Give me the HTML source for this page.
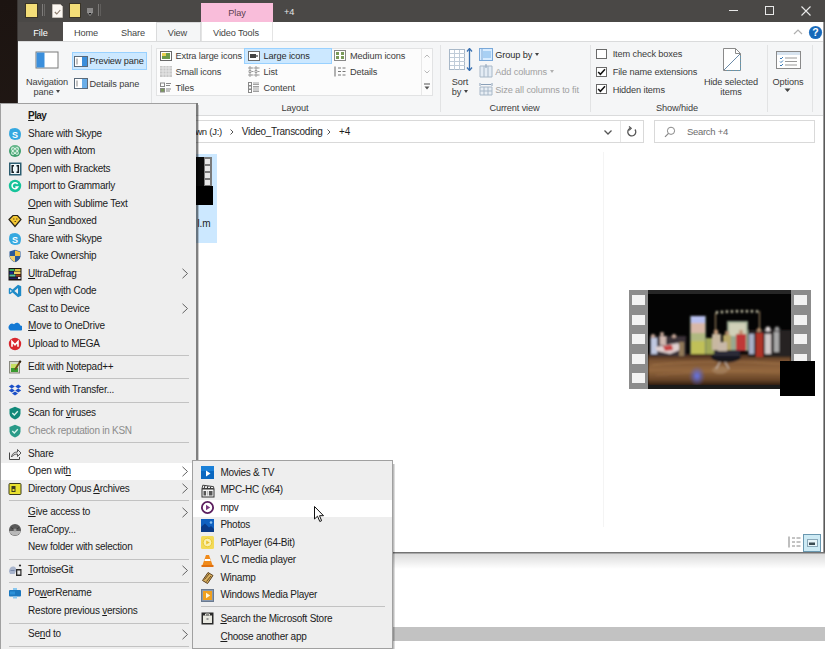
<!DOCTYPE html><html><head><meta charset="utf-8"><style>html,body{margin:0;padding:0;}body{width:825px;height:649px;overflow:hidden;position:relative;background:#fff;font-family:"Liberation Sans",sans-serif;}u{text-decoration:underline;text-underline-offset:1px;}</style></head><body>
<div style="position:absolute;left:0px;top:0px;width:18px;height:649px;background:linear-gradient(180deg,#1c1411 0%,#221915 30%,#2c211d 60%,#2a1f1b 80%,#1e1613 100%)"></div>
<div style="position:absolute;left:17px;top:0px;width:1px;height:110px;background:#3a3634"></div>
<div style="position:absolute;left:18px;top:0px;width:807px;height:22px;background:#4a4846"></div>
<div style="position:absolute;left:26px;top:4px;width:11px;height:13px;background:#f4de78;box-shadow:0 0 0 1px #3a3426"></div>
<div style="position:absolute;left:42px;top:4px;width:1px;height:12px;background:#7e7c7a"></div>
<div style="position:absolute;left:44px;top:4px;width:1px;height:12px;background:#6a6866"></div>
<svg style="position:absolute;left:52px;top:4px" width="11" height="14" viewBox="0 0 11 14"><path d="M0.5 0.5h8l2 2v11h-10z" fill="#fbf7f2" stroke="#d8d0c8" stroke-width="0.6"/><path d="M2.8 8l2 2 3.5-4" stroke="#8a7a6a" stroke-width="1.1" fill="none"/></svg>
<div style="position:absolute;left:70px;top:4px;width:10px;height:13px;background:#f4de78;box-shadow:0 0 0 1px #3a3426"></div>
<svg style="position:absolute;left:86px;top:8px" width="8" height="8" viewBox="0 0 8 8"><path d="M1 1h6M1 3h6" stroke="#d8d8d8" stroke-width="0.9"/><path d="M1.5 4.5h5l-2.5 3z" fill="#1a1a1a" stroke="#d8d8d8" stroke-width="0.6"/></svg>
<div style="position:absolute;left:98px;top:4px;width:1px;height:12px;background:#7a7876"></div>
<div style="position:absolute;left:100px;top:4px;width:1px;height:12px;background:#605e5c"></div>
<div style="position:absolute;left:201px;top:2.5px;width:72px;height:19.5px;background:#f9bdda"></div>
<div style="position:absolute;left:137px;width:200px;top:5.5px;height:14px;line-height:14px;font-size:9.2px;letter-spacing:-0.12px;color:#5b3f50;font-weight:normal;text-align:center;white-space:nowrap;">Play</div>
<div style="position:absolute;left:284px;top:5.0px;height:14px;line-height:14px;font-size:9.2px;letter-spacing:-0.12px;color:#e6e6e6;font-weight:normal;white-space:nowrap;">+4</div>
<div style="position:absolute;left:729px;top:10px;width:9px;height:1px;background:#e8e8e8"></div>
<div style="position:absolute;left:765px;top:6px;width:8px;height:8px;border:1px solid #e8e8e8;box-sizing:border-box;width:9px;height:9px"></div>
<svg style="position:absolute;left:801px;top:6px" width="10" height="10" viewBox="0 0 10 10"><path d="M0.5 0.5l9 9M9.5 0.5l-9 9" stroke="#eaeaea" stroke-width="1.1"/></svg>
<div style="position:absolute;left:18px;top:22px;width:805px;height:19px;background:#ffffff"></div>
<div style="position:absolute;left:18px;top:22px;width:45px;height:19px;background:#4f4c4a"></div>
<div style="position:absolute;left:-59.5px;width:200px;top:25.799999999999997px;height:14px;line-height:14px;font-size:9.2px;letter-spacing:-0.12px;color:#ffffff;font-weight:normal;text-align:center;white-space:nowrap;">File</div>
<div style="position:absolute;left:-14px;width:200px;top:25.799999999999997px;height:14px;line-height:14px;font-size:9.2px;letter-spacing:-0.12px;color:#444444;font-weight:normal;text-align:center;white-space:nowrap;">Home</div>
<div style="position:absolute;left:33px;width:200px;top:25.799999999999997px;height:14px;line-height:14px;font-size:9.2px;letter-spacing:-0.12px;color:#444444;font-weight:normal;text-align:center;white-space:nowrap;">Share</div>
<div style="position:absolute;left:156px;top:22px;width:45px;height:20px;background:#f5f6f7;border:1px solid #dadbdc;border-bottom:none;box-sizing:border-box"></div>
<div style="position:absolute;left:77.5px;width:200px;top:25.799999999999997px;height:14px;line-height:14px;font-size:9.2px;letter-spacing:-0.12px;color:#444444;font-weight:normal;text-align:center;white-space:nowrap;">View</div>
<div style="position:absolute;left:201px;top:22px;width:72px;height:19px;background:#ffffff;border-left:1px solid #e4e4e4;border-right:1px solid #e4e4e4;box-sizing:border-box"></div>
<div style="position:absolute;left:136px;width:200px;top:26.0px;height:14px;line-height:14px;font-size:9.2px;letter-spacing:-0.12px;color:#444444;font-weight:normal;text-align:center;white-space:nowrap;">Video Tools</div>
<svg style="position:absolute;left:793px;top:28px" width="10" height="7" viewBox="0 0 10 7"><path d="M1 6l4-4 4 4" stroke="#b0b0b0" stroke-width="1.2" fill="none"/></svg>
<svg style="position:absolute;left:808px;top:25px" width="15" height="15" viewBox="0 0 15 15"><circle cx="7.5" cy="7.5" r="6.6" fill="#1f6fc0"/><circle cx="7.5" cy="7.5" r="5.5" fill="#1668b8"/><text x="7.5" y="11.3" font-family="Liberation Sans" font-weight="bold" font-size="10.5" fill="#fff" text-anchor="middle">?</text></svg>
<div style="position:absolute;left:18px;top:41px;width:805px;height:75px;background:#f5f6f7;border-top:1px solid #dadbdc;border-bottom:1px solid #dadbdc;box-sizing:border-box"></div>
<svg style="position:absolute;left:35px;top:51px" width="24" height="18" viewBox="0 0 24 18"><rect x="1" y="1" width="22" height="16" fill="#fff" stroke="#7a7a7a"/><rect x="1.5" y="1.5" width="8" height="15" fill="#3b8fdc"/></svg>
<div style="position:absolute;left:-53px;width:200px;top:74.6px;height:14px;line-height:14px;font-size:9.2px;letter-spacing:-0.12px;color:#3b3b3b;font-weight:normal;text-align:center;white-space:nowrap;">Navigation</div>
<div style="position:absolute;left:-53px;width:200px;top:85.0px;height:14px;line-height:14px;font-size:9.2px;letter-spacing:-0.12px;color:#3b3b3b;font-weight:normal;text-align:center;white-space:nowrap;">pane<span style='display:inline-block;width:0;height:0;border-left:2.5px solid transparent;border-right:2.5px solid transparent;border-top:3px solid #444;vertical-align:middle;margin-left:3px;position:relative;top:-1px'></span></div>
<div style="position:absolute;left:72px;top:51.5px;width:75px;height:18px;background:#cce8ff;border:1px solid #99d1ff;box-sizing:border-box"></div>
<svg style="position:absolute;left:74px;top:55.5px" width="14" height="11" viewBox="0 0 14 11"><rect x="0.5" y="0.5" width="13" height="10" fill="#fff" stroke="#5a6a7a"/><rect x="8" y="1" width="5" height="9" fill="#3b8fdc"/><rect x="2.5" y="2.5" width="1" height="6" fill="#888"/></svg>
<div style="position:absolute;left:89.5px;top:53.8px;height:14px;line-height:14px;font-size:9.2px;letter-spacing:-0.12px;color:#2a2a2a;font-weight:normal;white-space:nowrap;">Preview pane</div>
<svg style="position:absolute;left:74px;top:78px" width="14" height="11" viewBox="0 0 14 11"><rect x="0.5" y="0.5" width="13" height="10" fill="#fff" stroke="#5a6a7a"/><rect x="8" y="1" width="5" height="9" fill="#6aaee8"/><rect x="2.5" y="2.5" width="1" height="6" fill="#888"/></svg>
<div style="position:absolute;left:89.5px;top:77.0px;height:14px;line-height:14px;font-size:9.2px;letter-spacing:-0.12px;color:#3b3b3b;font-weight:normal;white-space:nowrap;">Details pane</div>
<div style="position:absolute;left:151px;top:45px;width:1px;height:67px;background:#e2e3e4"></div>
<div style="position:absolute;left:156px;top:48px;width:277px;height:48px;border:1px solid #e2e3e4;box-sizing:border-box;background:#fcfcfc"></div>
<div style="position:absolute;left:244px;top:48px;width:88px;height:16px;background:#cce8ff;border:1px solid #99d1ff;box-sizing:border-box"></div>
<svg style="position:absolute;left:160px;top:51px" width="12" height="10" viewBox="0 0 12 10"><rect x="0.5" y="0.5" width="11" height="9" fill="#fff" stroke="#6a6a6a"/><rect x="2" y="2" width="8" height="6" fill="#6a9a4a"/><rect x="2" y="2" width="4" height="3" fill="#e8d050"/></svg>
<div style="position:absolute;left:175.5px;top:49.0px;height:14px;line-height:14px;font-size:9.2px;letter-spacing:-0.12px;color:#3b3b3b;font-weight:normal;white-space:nowrap;">Extra large icons</div>
<svg style="position:absolute;left:248px;top:51px" width="12" height="10" viewBox="0 0 12 10"><rect x="0.5" y="0.5" width="11" height="9" fill="#fff" stroke="#6a6a6a"/><rect x="2" y="3" width="6" height="4" fill="#444"/><rect x="8" y="4" width="2" height="2" fill="#888"/></svg>
<div style="position:absolute;left:263.6px;top:49.0px;height:14px;line-height:14px;font-size:9.2px;letter-spacing:-0.12px;color:#2a2a2a;font-weight:normal;white-space:nowrap;">Large icons</div>
<svg style="position:absolute;left:334px;top:50px" width="12" height="11" viewBox="0 0 12 11"><rect x="0.5" y="0.5" width="11" height="10" fill="#fff" stroke="#888"/><rect x="2" y="2" width="3" height="3" fill="#7a9a5a"/><rect x="7" y="2" width="3" height="3" fill="#7a9a5a"/><rect x="2" y="6" width="3" height="3" fill="#7a9a5a"/><rect x="7" y="6" width="3" height="3" fill="#7a9a5a"/></svg>
<div style="position:absolute;left:350px;top:49.0px;height:14px;line-height:14px;font-size:9.2px;letter-spacing:-0.12px;color:#3b3b3b;font-weight:normal;white-space:nowrap;">Medium icons</div>
<svg style="position:absolute;left:160px;top:66px" width="12" height="11" viewBox="0 0 12 11"><rect x="0" y="0" width="12" height="11" fill="#c8c8c8"/><path d="M0 2h12M0 5h12M0 8h12M3 0v11M6 0v11M9 0v11" stroke="#e6e6e6" stroke-width="1"/></svg>
<div style="position:absolute;left:175.5px;top:64.8px;height:14px;line-height:14px;font-size:9.2px;letter-spacing:-0.12px;color:#3b3b3b;font-weight:normal;white-space:nowrap;">Small icons</div>
<svg style="position:absolute;left:248px;top:66px" width="12" height="11" viewBox="0 0 12 11"><path d="M1 1h2v2H1zM1 4.5h2v2H1zM1 8h2v2H1zM7 1h2v2H7zM7 4.5h2v2H7zM7 8h2v2H7z" fill="none" stroke="#888" stroke-width="0.8"/><path d="M3.5 2h2M3.5 5.5h2M3.5 9h2M9.5 2h2M9.5 5.5h2M9.5 9h2" stroke="#999"/></svg>
<div style="position:absolute;left:263.6px;top:64.8px;height:14px;line-height:14px;font-size:9.2px;letter-spacing:-0.12px;color:#3b3b3b;font-weight:normal;white-space:nowrap;">List</div>
<svg style="position:absolute;left:334px;top:66px" width="12" height="11" viewBox="0 0 12 11"><path d="M1 0.5v10" stroke="#999" stroke-width="1.5"/><path d="M4 2h3M4 5.5h3M4 9h3M8.5 2h3M8.5 5.5h3M8.5 9h3" stroke="#777"/></svg>
<div style="position:absolute;left:350px;top:64.8px;height:14px;line-height:14px;font-size:9.2px;letter-spacing:-0.12px;color:#3b3b3b;font-weight:normal;white-space:nowrap;">Details</div>
<svg style="position:absolute;left:160px;top:82px" width="12" height="11" viewBox="0 0 12 11"><rect x="0.5" y="1" width="4" height="3.5" fill="none" stroke="#888"/><rect x="0.5" y="6.5" width="4" height="3.5" fill="#7a9a5a" stroke="#888"/><path d="M6 1.5h5M6 3.5h4M6 7h5M6 9h4" stroke="#888"/></svg>
<div style="position:absolute;left:175.5px;top:80.6px;height:14px;line-height:14px;font-size:9.2px;letter-spacing:-0.12px;color:#3b3b3b;font-weight:normal;white-space:nowrap;">Tiles</div>
<svg style="position:absolute;left:248px;top:82px" width="12" height="11" viewBox="0 0 12 11"><rect x="0.5" y="0.5" width="3" height="3" fill="none" stroke="#888"/><rect x="0.5" y="4" width="3" height="3" fill="none" stroke="#888"/><rect x="0.5" y="7.5" width="3" height="3" fill="none" stroke="#888"/><path d="M5 1h6M5 2.5h6M5 4.5h6M5 6h6M5 8h6M5 9.5h6" stroke="#888" stroke-width="0.8"/></svg>
<div style="position:absolute;left:263.6px;top:80.6px;height:14px;line-height:14px;font-size:9.2px;letter-spacing:-0.12px;color:#3b3b3b;font-weight:normal;white-space:nowrap;">Content</div>
<div style="position:absolute;left:421px;top:49px;width:11px;height:46px;border-left:1px solid #e8e8e8;box-sizing:border-box"></div>
<svg style="position:absolute;left:423px;top:53px" width="8" height="6" viewBox="0 0 8 6"><path d="M1.5 4.5l2.5-2.5 2.5 2.5" stroke="#b8b8b8" fill="none"/></svg>
<svg style="position:absolute;left:423px;top:69px" width="8" height="6" viewBox="0 0 8 6"><path d="M1.5 1.5l2.5 2.5 2.5-2.5" stroke="#b8b8b8" fill="none"/></svg>
<svg style="position:absolute;left:423px;top:83px" width="8" height="8" viewBox="0 0 8 8"><path d="M1 1h6" stroke="#555"/><path d="M1.5 3.5h5l-2.5 3z" fill="#555"/></svg>
<div style="position:absolute;left:195px;width:200px;top:100.7px;height:14px;line-height:14px;font-size:9.2px;letter-spacing:-0.12px;color:#3b3b3b;font-weight:normal;text-align:center;white-space:nowrap;">Layout</div>
<div style="position:absolute;left:440px;top:45px;width:1px;height:67px;background:#e2e3e4"></div>
<svg style="position:absolute;left:449px;top:48px" width="24" height="23" viewBox="0 0 24 23"><rect x="0.5" y="1.5" width="15" height="20" fill="#fff" stroke="#a8b8c8"/><path d="M1 5.5h15M1 9.5h15M1 13.5h15M1 17.5h15M5.5 2v20M10.5 2v20" stroke="#c0ccd8"/><path d="M20.5 1v21" stroke="#3a70b0" stroke-width="1.3"/><path d="M18 3.5l2.5-3 2.5 3M18 19.5l2.5 3 2.5-3" stroke="#3a70b0" stroke-width="1.3" fill="none"/></svg>
<div style="position:absolute;left:360px;width:200px;top:74.5px;height:14px;line-height:14px;font-size:9.2px;letter-spacing:-0.12px;color:#3b3b3b;font-weight:normal;text-align:center;white-space:nowrap;">Sort</div>
<div style="position:absolute;left:360px;width:200px;top:85.0px;height:14px;line-height:14px;font-size:9.2px;letter-spacing:-0.12px;color:#3b3b3b;font-weight:normal;text-align:center;white-space:nowrap;">by<span style='display:inline-block;width:0;height:0;border-left:2.5px solid transparent;border-right:2.5px solid transparent;border-top:3px solid #444;vertical-align:middle;margin-left:3px;position:relative;top:-1px'></span></div>
<svg style="position:absolute;left:479px;top:48px" width="14" height="13" viewBox="0 0 14 13"><rect x="0.5" y="0.5" width="13" height="12" fill="#d8ecff" stroke="#7aa8d8"/><path d="M3 1v11" stroke="#7aa8d8"/><rect x="4" y="3" width="8" height="7" fill="#a8d0f4"/></svg>
<div style="position:absolute;left:495.3px;top:47.8px;height:14px;line-height:14px;font-size:9.2px;letter-spacing:-0.12px;color:#2a2a2a;font-weight:normal;white-space:nowrap;">Group by<span style='display:inline-block;width:0;height:0;border-left:2.5px solid transparent;border-right:2.5px solid transparent;border-top:3px solid #444;vertical-align:middle;margin-left:3px;position:relative;top:-1px'></span></div>
<svg style="position:absolute;left:479px;top:64px" width="14" height="14" viewBox="0 0 14 14"><path d="M1 2h12v11H1z" fill="#e4ecf4" stroke="#a8b8c8"/><path d="M5 2v11M9 2v11" stroke="#a8b8c8"/><path d="M7 0v4" stroke="#8aa0b8"/></svg>
<div style="position:absolute;left:495.3px;top:65.0px;height:14px;line-height:14px;font-size:9.2px;letter-spacing:-0.12px;color:#a0a0a0;font-weight:normal;white-space:nowrap;">Add columns<span style='display:inline-block;width:0;height:0;border-left:2.5px solid transparent;border-right:2.5px solid transparent;border-top:3px solid #b0b0b0;vertical-align:middle;margin-left:3px;position:relative;top:-1px'></span></div>
<svg style="position:absolute;left:479px;top:82px" width="14" height="14" viewBox="0 0 14 14"><path d="M1 5h12v8H1z" fill="#e8eef4" stroke="#a8b8c8"/><path d="M5 5v8M9 5v8M1 9h12" stroke="#a8b8c8"/><path d="M1 1v3M13 1v3M2 2.5h10" stroke="#8aa0b8"/></svg>
<div style="position:absolute;left:495.3px;top:82.8px;height:14px;line-height:14px;font-size:9.2px;letter-spacing:-0.12px;color:#a0a0a0;font-weight:normal;white-space:nowrap;">Size all columns to fit</div>
<div style="position:absolute;left:414.5px;width:200px;top:101.0px;height:14px;line-height:14px;font-size:9.2px;letter-spacing:-0.12px;color:#3b3b3b;font-weight:normal;text-align:center;white-space:nowrap;">Current view</div>
<div style="position:absolute;left:590px;top:45px;width:1px;height:67px;background:#e2e3e4"></div>
<div style="position:absolute;left:596px;top:49px;width:11px;height:10px;border:1px solid #6a6a6a;background:#fff;box-sizing:border-box"></div>
<div style="position:absolute;left:596px;top:67px;width:11px;height:10px;border:1px solid #6a6a6a;background:#fff;box-sizing:border-box"></div>
<div style="position:absolute;left:596px;top:84px;width:11px;height:10px;border:1px solid #6a6a6a;background:#fff;box-sizing:border-box"></div>
<svg style="position:absolute;left:597px;top:68px" width="9" height="8" viewBox="0 0 9 8"><path d="M1.2 4l2.2 2.3L8 1.3" stroke="#111" stroke-width="1.5" fill="none"/></svg>
<svg style="position:absolute;left:597px;top:85px" width="9" height="8" viewBox="0 0 9 8"><path d="M1.2 4l2.2 2.3L8 1.3" stroke="#111" stroke-width="1.5" fill="none"/></svg>
<div style="position:absolute;left:612.7px;top:47.4px;height:14px;line-height:14px;font-size:9.2px;letter-spacing:-0.12px;color:#3b3b3b;font-weight:normal;white-space:nowrap;">Item check boxes</div>
<div style="position:absolute;left:612.7px;top:64.9px;height:14px;line-height:14px;font-size:9.2px;letter-spacing:-0.12px;color:#3b3b3b;font-weight:normal;white-space:nowrap;">File name extensions</div>
<div style="position:absolute;left:612.7px;top:82.6px;height:14px;line-height:14px;font-size:9.2px;letter-spacing:-0.12px;color:#3b3b3b;font-weight:normal;white-space:nowrap;">Hidden items</div>
<svg style="position:absolute;left:722px;top:48px" width="20" height="24" viewBox="0 0 20 24"><path d="M1.5 0.5h12l5 5v17h-17z" fill="#fff" stroke="#8a8a8a"/><path d="M13.5 0.5v5h5" fill="none" stroke="#8a8a8a"/><path d="M2 22l16-16" stroke="#6a8aa8"/><path d="M18.5 8v14.5H5" stroke="#5a9ab8" stroke-dasharray="1.5 1.5" fill="none"/></svg>
<div style="position:absolute;left:631px;width:200px;top:74.6px;height:14px;line-height:14px;font-size:9.2px;letter-spacing:-0.12px;color:#3b3b3b;font-weight:normal;text-align:center;white-space:nowrap;">Hide selected</div>
<div style="position:absolute;left:631px;width:200px;top:85.3px;height:14px;line-height:14px;font-size:9.2px;letter-spacing:-0.12px;color:#3b3b3b;font-weight:normal;text-align:center;white-space:nowrap;">items</div>
<div style="position:absolute;left:577px;width:200px;top:100.5px;height:14px;line-height:14px;font-size:9.2px;letter-spacing:-0.12px;color:#3b3b3b;font-weight:normal;text-align:center;white-space:nowrap;">Show/hide</div>
<div style="position:absolute;left:767px;top:45px;width:1px;height:67px;background:#e2e3e4"></div>
<svg style="position:absolute;left:776px;top:51px" width="25" height="18" viewBox="0 0 25 18"><rect x="0.5" y="0.5" width="24" height="17" fill="#fff" stroke="#8a8a8a"/><rect x="1" y="1" width="23" height="3" fill="#d8e4f0"/><path d="M4 7l1 1 2-2M4 10.5l1 1 2-2M4 14l1 1 2-2" stroke="#3a7ab8" fill="none"/><path d="M9 7h12M9 10.5h12M9 14h12" stroke="#999"/></svg>
<div style="position:absolute;left:688px;width:200px;top:74.6px;height:14px;line-height:14px;font-size:9.2px;letter-spacing:-0.12px;color:#3b3b3b;font-weight:normal;text-align:center;white-space:nowrap;">Options</div>
<svg style="position:absolute;left:784px;top:88px" width="7" height="5" viewBox="0 0 7 5"><path d="M0.5 0.5h6l-3 3.5z" fill="#444"/></svg>
<div style="position:absolute;left:812px;top:45px;width:1px;height:67px;background:#e2e3e4"></div>
<div style="position:absolute;left:120px;top:120px;width:524px;height:23px;border:1px solid #d9d9d9;box-sizing:border-box;background:#fff"></div>
<div style="position:absolute;left:620px;top:121px;width:1px;height:21px;background:#e6e6e6"></div>
<div style="position:absolute;left:100px;width:122px;text-align:right;top:124.5px;height:14px;line-height:14px;font-size:9.5px;letter-spacing:-0.25px;color:#1e1e1e;white-space:nowrap">Unknown (J:)</div>
<svg style="position:absolute;left:229px;top:128px" width="6" height="8" viewBox="0 0 6 8"><path d="M1.5 1.5l2.5 2.5-2.5 2.5" stroke="#555" fill="none"/></svg>
<div style="position:absolute;left:241.8px;top:124.5px;height:14px;line-height:14px;font-size:10px;letter-spacing:-0.28px;color:#1e1e1e;font-weight:normal;white-space:nowrap;">Video_Transcoding</div>
<svg style="position:absolute;left:326px;top:128px" width="6" height="8" viewBox="0 0 6 8"><path d="M1.5 1.5l2.5 2.5-2.5 2.5" stroke="#555" fill="none"/></svg>
<div style="position:absolute;left:339px;top:124.5px;height:14px;line-height:14px;font-size:10px;letter-spacing:-0.12px;color:#1e1e1e;font-weight:normal;white-space:nowrap;">+4</div>
<svg style="position:absolute;left:603px;top:129px" width="10" height="7" viewBox="0 0 10 7"><path d="M1.5 1.5l3.5 3.5 3.5-3.5" stroke="#555" stroke-width="1.3" fill="none"/></svg>
<svg style="position:absolute;left:626px;top:126px" width="12" height="12" viewBox="0 0 12 12"><path d="M9 3.5A4 4 0 1 1 4 2.3" stroke="#555" stroke-width="1.3" fill="none"/><path d="M3 0.5l2.2 1.8-2 2" stroke="#555" stroke-width="1.2" fill="none"/></svg>
<div style="position:absolute;left:654px;top:120px;width:161px;height:23px;border:1px solid #d9d9d9;box-sizing:border-box;background:#fff"></div>
<svg style="position:absolute;left:664px;top:126px" width="12" height="12" viewBox="0 0 12 12"><circle cx="7" cy="4.8" r="3.6" stroke="#888" stroke-width="1" fill="none"/><path d="M4.5 7.3L1 10.8" stroke="#888" stroke-width="1.2"/></svg>
<div style="position:absolute;left:687px;top:124.5px;height:14px;line-height:14px;font-size:9.5px;letter-spacing:-0.3px;color:#6d6d6d;font-weight:normal;white-space:nowrap;">Search +4</div>
<div style="position:absolute;left:150px;top:154px;width:67px;height:89px;background:#cce8ff"></div>
<div style="position:absolute;left:150px;top:157px;width:61px;height:29px;background:#0a0a0a"></div>
<div style="position:absolute;left:203.5px;top:157px;width:8px;height:29px;background:#7a7a7a"></div>
<div style="position:absolute;left:205px;top:159px;width:5px;height:5px;background:#e8e8e8"></div>
<div style="position:absolute;left:205px;top:166px;width:5px;height:5px;background:#e8e8e8"></div>
<div style="position:absolute;left:205px;top:173px;width:5px;height:5px;background:#e8e8e8"></div>
<div style="position:absolute;left:205px;top:180px;width:5px;height:5px;background:#e8e8e8"></div>
<div style="position:absolute;left:150px;top:186px;width:63px;height:19px;background:#000"></div>
<div style="position:absolute;left:197.5px;top:216.5px;height:14px;line-height:14px;font-size:10px;letter-spacing:-0.1px;color:#1e1e1e;font-weight:normal;white-space:nowrap;">l.m</div>
<div style="position:absolute;left:603px;top:152px;width:1px;height:375px;background:#f4f4f4"></div>
<div style="position:absolute;left:629px;top:290px;width:182px;height:99px;background:#8c8c8c"></div>
<div style="position:absolute;left:632px;top:295.0px;width:13px;height:10px;background:#f2f2f2"></div>
<div style="position:absolute;left:794px;top:295.0px;width:13px;height:10px;background:#f2f2f2"></div>
<div style="position:absolute;left:632px;top:314.6px;width:13px;height:10px;background:#f2f2f2"></div>
<div style="position:absolute;left:794px;top:314.6px;width:13px;height:10px;background:#f2f2f2"></div>
<div style="position:absolute;left:632px;top:334.2px;width:13px;height:10px;background:#f2f2f2"></div>
<div style="position:absolute;left:794px;top:334.2px;width:13px;height:10px;background:#f2f2f2"></div>
<div style="position:absolute;left:632px;top:353.8px;width:13px;height:10px;background:#f2f2f2"></div>
<div style="position:absolute;left:794px;top:353.8px;width:13px;height:10px;background:#f2f2f2"></div>
<div style="position:absolute;left:632px;top:373.4px;width:13px;height:10px;background:#f2f2f2"></div>
<div style="position:absolute;left:794px;top:373.4px;width:13px;height:10px;background:#f2f2f2"></div>
<svg style="position:absolute;left:648px;top:290px" width="143" height="99" viewBox="0 0 143 99">
<defs>
<linearGradient id="flr" x1="0" y1="0" x2="0" y2="1"><stop offset="0" stop-color="#3a2416"/><stop offset="0.2" stop-color="#7a5232"/><stop offset="0.5" stop-color="#94683e"/><stop offset="0.8" stop-color="#6a4628"/><stop offset="1" stop-color="#2a1a10"/></linearGradient>
<radialGradient id="blu" cx="0.5" cy="0.5" r="0.5"><stop offset="0" stop-color="#6a7af0"/><stop offset="1" stop-color="#4a5ad0" stop-opacity="0"/></radialGradient>
<filter id="bl" x="-5%" y="-5%" width="110%" height="110%"><feGaussianBlur stdDeviation="0.9"/></filter>
</defs>
<rect width="143" height="99" fill="#040404"/>
<g filter="url(#bl)">
<rect y="64" width="143" height="32" fill="url(#flr)"/>
<path d="M4 75 Q60 69 138 74" stroke="#b88858" stroke-width="1.2" fill="none" opacity="0.55"/>
<path d="M8 85 Q70 79 132 83" stroke="#a87850" stroke-width="1" fill="none" opacity="0.5"/>
<ellipse cx="49" cy="86" rx="8" ry="10" fill="url(#blu)"/>
<ellipse cx="72" cy="80" rx="8" ry="4" fill="#b09070" opacity="0.5"/>
<!-- banner -->
<rect x="42" y="26" width="16" height="38" fill="#6a7a60"/>
<rect x="43" y="26" width="14" height="7" fill="#b8c0f0"/>
<rect x="43" y="33" width="14" height="10" fill="#d8b8a8"/>
<rect x="43" y="43" width="14" height="8" fill="#b0b880"/>
<rect x="43" y="51" width="14" height="13" fill="#c0c058"/>
<!-- light string -->
<path d="M67.5 42 V23 M111.5 42 V21" stroke="#c8a878" stroke-width="0.9"/>
<path d="M68 22.5 Q89 20.5 111 21.5" stroke="#fffad8" stroke-width="2.5" stroke-dasharray="2 3" fill="none"/>
<!-- board -->
<rect x="79" y="31" width="21" height="30" fill="#98a890"/>
<rect x="81" y="33" width="17" height="13" fill="#d0d0b8"/>
<!-- left group -->
<rect x="2" y="46" width="36" height="20" fill="#3a3038"/>
<circle cx="5" cy="46" r="2" fill="#d0b0a0"/><circle cx="14" cy="44" r="2" fill="#d0b0a0"/><circle cx="26" cy="46" r="2" fill="#d0b0a0"/>
<rect x="3" y="48" width="6" height="16" fill="#c0c8e0"/>
<rect x="12" y="46" width="6" height="9" fill="#d0b8b0"/>
<path d="M7 57 L30 53 L34 59 L22 64 L9 61z" fill="#e0d0d0"/>
<path d="M15 56 L24 55 L25 60 L17 61z" fill="#c84040"/>
<rect x="31" y="52" width="5" height="14" fill="#907858"/>
<!-- center people -->
<rect x="58" y="48" width="9" height="16" fill="#a0a858"/>
<rect x="64" y="44" width="9" height="16" fill="#c8b8a0"/>
<circle cx="68" cy="42" r="2.4" fill="#c09878"/>
<rect x="75" y="45" width="8" height="16" fill="#b8a868"/>
<circle cx="79" cy="43" r="2.2" fill="#b08868"/>
<rect x="88" y="44" width="10" height="17" fill="#c03838"/>
<circle cx="93" cy="42" r="2.2" fill="#c09070"/>
<!-- right group -->
<rect x="100" y="40" width="43" height="27" fill="#262024"/>
<rect x="101" y="44" width="5" height="20" fill="#a8b0c8"/>
<rect x="108" y="43" width="7" height="24" fill="#b03028"/>
<rect x="117" y="44" width="6" height="20" fill="#d0c8c8"/>
<rect x="126" y="42" width="5" height="20" fill="#a8a8a8"/>
<circle cx="111" cy="40" r="2.2" fill="#b08868"/><circle cx="120" cy="39" r="2.6" fill="#e0d8d8"/><circle cx="129" cy="39" r="2.5" fill="#999"/>
<!-- kid on tire -->
<ellipse cx="78" cy="67" rx="15" ry="5.5" fill="#18181e"/>
<rect x="66" y="60" width="26" height="6" fill="#2a2a38"/>
<rect x="70" y="52" width="9" height="9" fill="#c8b8a8"/>
<path d="M72 72 L68 79 M77 72 L81 79" stroke="#d8d0c8" stroke-width="1"/>
</g>
<rect y="0" width="143" height="4" fill="#262626"/>
<rect y="95" width="143" height="4" fill="#1a1a1a"/>
</svg>
<div style="position:absolute;left:780px;top:361px;width:35px;height:35px;background:#000"></div>
<div style="position:absolute;left:823px;top:22px;width:1px;height:531px;background:#9a9a9a"></div>
<div style="position:absolute;left:824px;top:22px;width:1px;height:531px;background:#5a5a5a"></div>
<svg style="position:absolute;left:788px;top:536px" width="14" height="12" viewBox="0 0 14 12"><path d="M1 0.5v11" stroke="#aaa" stroke-width="1.5"/><path d="M4 2h3M4 6h3M4 10h3M8.5 2h4M8.5 6h4M8.5 10h4" stroke="#888"/></svg>
<div style="position:absolute;left:803px;top:534px;width:18px;height:18px;background:#cdeaf4;border:1px solid #6a98b0;box-sizing:border-box"></div>
<svg style="position:absolute;left:807px;top:539px" width="11" height="8" viewBox="0 0 11 8"><rect x="0.5" y="0.5" width="10" height="7" fill="#e8f4f8" stroke="#8aa8b8"/><path d="M2 3.5h6v2.5H2z" fill="#3a4a50"/></svg>
<div style="position:absolute;left:18px;top:552px;width:807px;height:1px;background:#737373"></div>
<div style="position:absolute;left:18px;top:553px;width:807px;height:1px;background:#a8a8a8"></div>
<div style="position:absolute;left:18px;top:554px;width:807px;height:15px;background:linear-gradient(180deg,rgba(0,0,0,0.14),rgba(0,0,0,0))"></div>
<div style="position:absolute;left:18px;top:627px;width:807px;height:14px;background:#c2c2c2"></div>
<div style="position:absolute;left:0px;top:103px;width:196px;height:560px;background:#eeeeee;border:1px solid #a0a0a0;border-right:none;box-sizing:border-box"></div>
<div style="position:absolute;left:196px;top:103px;width:2px;height:546px;background:rgba(0,0,0,0.5)"></div>
<div style="position:absolute;left:198px;top:105px;width:1px;height:544px;background:rgba(0,0,0,0.2)"></div>
<div style="position:absolute;left:28.1px;top:109.0px;height:14px;line-height:14px;font-size:10px;letter-spacing:-0.25px;color:#1b1b1b;font-weight:normal;white-space:nowrap;"><b style='letter-spacing:-0.6px'><u>P</u>lay</b></div>
<svg style="position:absolute;left:8px;top:126.5px" width="14" height="14" viewBox="0 0 14 14"><circle cx="7" cy="7" r="6" fill="#35a8e0"/><circle cx="4.5" cy="4.5" r="3" fill="#35a8e0"/><circle cx="9.5" cy="9.5" r="3" fill="#35a8e0"/><text x="7" y="10.5" font-family="Liberation Sans" font-weight="bold" font-size="9" fill="#fff" text-anchor="middle">S</text></svg>
<div style="position:absolute;left:28.1px;top:126.5px;height:14px;line-height:14px;font-size:10px;letter-spacing:-0.25px;color:#1b1b1b;font-weight:normal;white-space:nowrap;">Share with Skype</div>
<svg style="position:absolute;left:8px;top:144.0px" width="14" height="14" viewBox="0 0 14 14"><circle cx="7" cy="7" r="6" fill="#3f9f6e"/><circle cx="7" cy="5.5" r="4.5" fill="#7cc49a" opacity="0.7"/><ellipse cx="7" cy="7" rx="4.5" ry="1.8" fill="none" stroke="#e8f8ee" stroke-width="0.9" transform="rotate(45 7 7)"/><ellipse cx="7" cy="7" rx="4.5" ry="1.8" fill="none" stroke="#e8f8ee" stroke-width="0.9" transform="rotate(-45 7 7)"/></svg>
<div style="position:absolute;left:28.1px;top:144.0px;height:14px;line-height:14px;font-size:10px;letter-spacing:-0.25px;color:#1b1b1b;font-weight:normal;white-space:nowrap;">Open with Atom</div>
<svg style="position:absolute;left:8px;top:161.5px" width="14" height="14" viewBox="0 0 14 14"><rect x="1" y="0.5" width="12.5" height="13" fill="#2c5d70"/><rect x="2.5" y="2" width="9.5" height="10" fill="#eef6f8"/><path d="M6 3.8H4.2v6.4H6M8.5 3.8h1.8v6.4H8.5" stroke="#141e24" stroke-width="1.5" fill="none"/></svg>
<div style="position:absolute;left:28.1px;top:161.5px;height:14px;line-height:14px;font-size:10px;letter-spacing:-0.25px;color:#1b1b1b;font-weight:normal;white-space:nowrap;">Open with Brackets</div>
<svg style="position:absolute;left:8px;top:179.0px" width="14" height="14" viewBox="0 0 14 14"><circle cx="7" cy="7" r="6.2" fill="#16c39a"/><path d="M9.6 5.2A3 3 0 1 0 9.8 8H7.3" stroke="#fff" stroke-width="1.5" fill="none"/></svg>
<div style="position:absolute;left:28.1px;top:179.0px;height:14px;line-height:14px;font-size:10px;letter-spacing:-0.25px;color:#1b1b1b;font-weight:normal;white-space:nowrap;">Import to Grammarly</div>
<div style="position:absolute;left:28.1px;top:196.5px;height:14px;line-height:14px;font-size:10px;letter-spacing:-0.25px;color:#1b1b1b;font-weight:normal;white-space:nowrap;"><u>O</u>pen with Sublime Text</div>
<svg style="position:absolute;left:8px;top:214.0px" width="14" height="14" viewBox="0 0 14 14"><path d="M1 5.5L5 1.5h4.5L13 5.5 7 12.5z" fill="#f4c834" stroke="#2a2418" stroke-width="1.2"/><path d="M5 5h1.5M8 5h1.5M6.5 7.5h1.5" stroke="#6a4a10" stroke-width="1.2"/></svg>
<div style="position:absolute;left:28.1px;top:214.0px;height:14px;line-height:14px;font-size:10px;letter-spacing:-0.25px;color:#1b1b1b;font-weight:normal;white-space:nowrap;">Run <u>S</u>andboxed</div>
<svg style="position:absolute;left:8px;top:231.5px" width="14" height="14" viewBox="0 0 14 14"><circle cx="7" cy="7" r="6" fill="#35a8e0"/><circle cx="4.5" cy="4.5" r="3" fill="#35a8e0"/><circle cx="9.5" cy="9.5" r="3" fill="#35a8e0"/><text x="7" y="10.5" font-family="Liberation Sans" font-weight="bold" font-size="9" fill="#fff" text-anchor="middle">S</text></svg>
<div style="position:absolute;left:28.1px;top:231.5px;height:14px;line-height:14px;font-size:10px;letter-spacing:-0.25px;color:#1b1b1b;font-weight:normal;white-space:nowrap;">Share with Skype</div>
<svg style="position:absolute;left:8px;top:249.0px" width="14" height="14" viewBox="0 0 14 14"><path d="M7 0.8L12.5 2.5V7c0 3-2.5 5-5.5 6.2C4 12 1.5 10 1.5 7V2.5z" fill="#2a5a9a"/><path d="M7 1.5V13C9.5 12 12 10 12 7V3z" fill="#f0c040"/><path d="M1.8 7H12.2V7.3C12 10 9.6 12 7 13 4.4 12 2 10 1.8 7.3z" fill="#2a5a9a"/><path d="M1.8 7H7V13C4.4 12 2 10 1.8 7.3z" fill="#f0d070"/><path d="M7 13C9.6 12 12 10 12.2 7H7z" fill="#2a5a9a"/></svg>
<div style="position:absolute;left:28.1px;top:249.0px;height:14px;line-height:14px;font-size:10px;letter-spacing:-0.25px;color:#1b1b1b;font-weight:normal;white-space:nowrap;">Take Ownership</div>
<svg style="position:absolute;left:8px;top:266.5px" width="14" height="14" viewBox="0 0 14 14"><rect x="0.5" y="1" width="13" height="12.5" fill="#1a1410"/><rect x="1.5" y="2" width="5" height="2" fill="#40b060"/><rect x="7" y="2" width="5.5" height="2" fill="#d8c040"/><rect x="1.5" y="4.5" width="4" height="2.5" fill="#1a2a90"/><rect x="6" y="4.5" width="6.5" height="2.5" fill="#f0d060"/><rect x="1.5" y="7.5" width="6" height="2" fill="#50c0a0"/><rect x="8" y="7.5" width="4.5" height="2" fill="#a04020"/><rect x="1.5" y="10.5" width="11" height="1.5" fill="#202060"/><rect x="10" y="10" width="2.5" height="2" fill="#e0e0e0"/></svg>
<div style="position:absolute;left:28.1px;top:266.5px;height:14px;line-height:14px;font-size:10px;letter-spacing:-0.25px;color:#1b1b1b;font-weight:normal;white-space:nowrap;"><u>U</u>ltraDefrag</div>
<svg style="position:absolute;left:181px;top:268.0px" width="8" height="11" viewBox="0 0 8 11"><path d="M1.5 0.8L6.5 5.5 1.5 10.2" stroke="#606060" stroke-width="1" fill="none"/></svg>
<svg style="position:absolute;left:8px;top:284.0px" width="14" height="14" viewBox="0 0 14 14"><path d="M10 0.8L13.2 2.3V11.7L10 13.2 4.5 8.4 2 10.3 0.8 9.6V4.4L2 3.7 4.5 5.6z" fill="#1f8bc8"/><path d="M10 4V10L6.4 7z" fill="#eeeeee"/><path d="M2.2 5.4L3.9 7 2.2 8.6z" fill="#eeeeee"/></svg>
<div style="position:absolute;left:28.1px;top:284.0px;height:14px;line-height:14px;font-size:10px;letter-spacing:-0.25px;color:#1b1b1b;font-weight:normal;white-space:nowrap;">Open w<u>i</u>th Code</div>
<div style="position:absolute;left:28.1px;top:301.5px;height:14px;line-height:14px;font-size:10px;letter-spacing:-0.25px;color:#1b1b1b;font-weight:normal;white-space:nowrap;">Cast to Device</div>
<svg style="position:absolute;left:181px;top:303.0px" width="8" height="11" viewBox="0 0 8 11"><path d="M1.5 0.8L6.5 5.5 1.5 10.2" stroke="#606060" stroke-width="1" fill="none"/></svg>
<svg style="position:absolute;left:8px;top:319.0px" width="14" height="14" viewBox="0 0 14 14"><path d="M2.5 11.5h9.5a2.5 2.5 0 0 0 0.3-5A3.5 3.5 0 0 0 6 5.2 2.8 2.8 0 0 0 2.5 11.5z" fill="#1479d4"/></svg>
<div style="position:absolute;left:28.1px;top:319.0px;height:14px;line-height:14px;font-size:10px;letter-spacing:-0.25px;color:#1b1b1b;font-weight:normal;white-space:nowrap;"><u>M</u>ove to OneDrive</div>
<svg style="position:absolute;left:8px;top:336.5px" width="14" height="14" viewBox="0 0 14 14"><circle cx="7" cy="7" r="6.2" fill="#d9272e"/><path d="M4 9.8V4.5L7 7.8 10 4.5V9.8" stroke="#fff" stroke-width="1.6" fill="none"/></svg>
<div style="position:absolute;left:28.1px;top:336.5px;height:14px;line-height:14px;font-size:10px;letter-spacing:-0.25px;color:#1b1b1b;font-weight:normal;white-space:nowrap;">Upload to MEGA</div>
<div style="position:absolute;left:8.5px;top:355px;width:180px;height:1px;background:#c2c2c2"></div>
<svg style="position:absolute;left:8px;top:359.7px" width="14" height="14" viewBox="0 0 14 14"><rect x="1.5" y="1.5" width="10" height="11.5" fill="#d8dcc8" stroke="#8a8a80" stroke-width="1"/><rect x="3" y="4" width="7" height="8" fill="#c8e060"/><rect x="3" y="8" width="7" height="4" fill="#3a9a30"/><path d="M7 9.5l5.5-8.5" stroke="#6a4a18" stroke-width="1.8"/><path d="M11.5 2.5l1.2-1.8" stroke="#2a2010" stroke-width="1.8"/></svg>
<div style="position:absolute;left:28.1px;top:359.7px;height:14px;line-height:14px;font-size:10px;letter-spacing:-0.25px;color:#1b1b1b;font-weight:normal;white-space:nowrap;">Edit with <u>N</u>otepad++</div>
<div style="position:absolute;left:8.5px;top:378px;width:180px;height:1px;background:#c2c2c2"></div>
<svg style="position:absolute;left:8px;top:382.9px" width="14" height="14" viewBox="0 0 14 14"><path d="M3.8 1.5L0.8 3.5 3.8 5.5 6.8 3.5zM10.2 1.5L7.2 3.5 10.2 5.5 13.2 3.5zM3.8 5.5L0.8 7.5 3.8 9.5 6.8 7.5zM10.2 5.5L7.2 7.5 10.2 9.5 13.2 7.5zM7 8.5L4 10.5 7 12.5 10 10.5z" fill="#1a4fc8"/></svg>
<div style="position:absolute;left:28.1px;top:382.9px;height:14px;line-height:14px;font-size:10px;letter-spacing:-0.25px;color:#1b1b1b;font-weight:normal;white-space:nowrap;">Send with Transfer...</div>
<div style="position:absolute;left:8.5px;top:402px;width:180px;height:1px;background:#c2c2c2"></div>
<svg style="position:absolute;left:8px;top:406.09999999999997px" width="14" height="14" viewBox="0 0 14 14"><path d="M7 0.8L12.5 3V7.5C12.5 10.5 10 12.5 7 13.5 4 12.5 1.5 10.5 1.5 7.5V3z" fill="#11897a"/><path d="M4.3 7l2 2 3.5-3.8" stroke="#d8f4ec" stroke-width="1.3" fill="none"/></svg>
<div style="position:absolute;left:28.1px;top:406.09999999999997px;height:14px;line-height:14px;font-size:10px;letter-spacing:-0.25px;color:#1b1b1b;font-weight:normal;white-space:nowrap;">Scan for <u>v</u>iruses</div>
<svg style="position:absolute;left:8px;top:423.59999999999997px" width="14" height="14" viewBox="0 0 14 14"><path d="M7 0.8L12.5 3V7.5C12.5 10.5 10 12.5 7 13.5 4 12.5 1.5 10.5 1.5 7.5V3z" fill="#2a9a88"/><path d="M4.3 7l2 2 3.5-3.8" stroke="#d8f4ec" stroke-width="1.3" fill="none"/></svg>
<div style="position:absolute;left:28.1px;top:423.59999999999997px;height:14px;line-height:14px;font-size:10px;letter-spacing:-0.25px;color:#1b1b1b;font-weight:normal;white-space:nowrap;"><span style='color:#8c8c8c'>Check reputation in KSN</span></div>
<div style="position:absolute;left:8.5px;top:442px;width:180px;height:1px;background:#c2c2c2"></div>
<svg style="position:absolute;left:8px;top:446.79999999999995px" width="14" height="14" viewBox="0 0 14 14"><path d="M1.5 5.5V12.5H11.5V10" stroke="#444" stroke-width="1" fill="none"/><path d="M3.5 10C4 6.5 6.5 5 9.5 5V2.5L13 6 9.5 9.5V7C7 7 5 8 3.5 10z" stroke="#444" stroke-width="0.9" fill="none"/></svg>
<div style="position:absolute;left:28.1px;top:446.79999999999995px;height:14px;line-height:14px;font-size:10px;letter-spacing:-0.25px;color:#1b1b1b;font-weight:normal;white-space:nowrap;">Share</div>
<div style="position:absolute;left:1px;top:462.59999999999997px;width:195px;height:17.4px;background:#ffffff"></div>
<div style="position:absolute;left:28.1px;top:464.29999999999995px;height:14px;line-height:14px;font-size:10px;letter-spacing:-0.25px;color:#1b1b1b;font-weight:normal;white-space:nowrap;">Open wit<u>h</u></div>
<svg style="position:absolute;left:181px;top:465.79999999999995px" width="8" height="11" viewBox="0 0 8 11"><path d="M1.5 0.8L6.5 5.5 1.5 10.2" stroke="#606060" stroke-width="1" fill="none"/></svg>
<svg style="position:absolute;left:8px;top:481.79999999999995px" width="14" height="14" viewBox="0 0 14 14"><rect x="1" y="1.5" width="12" height="11" rx="1" fill="#e8e030" stroke="#3a3a20" stroke-width="1"/><rect x="3.5" y="4" width="4" height="6" fill="#3a3a20"/><rect x="4.5" y="7" width="2" height="2" fill="#e8e030"/></svg>
<div style="position:absolute;left:28.1px;top:481.79999999999995px;height:14px;line-height:14px;font-size:10px;letter-spacing:-0.25px;color:#1b1b1b;font-weight:normal;white-space:nowrap;">Directory Opus <u>A</u>rchives</div>
<svg style="position:absolute;left:181px;top:483.29999999999995px" width="8" height="11" viewBox="0 0 8 11"><path d="M1.5 0.8L6.5 5.5 1.5 10.2" stroke="#606060" stroke-width="1" fill="none"/></svg>
<div style="position:absolute;left:8.5px;top:500px;width:180px;height:1px;background:#c2c2c2"></div>
<div style="position:absolute;left:28.1px;top:504.99999999999994px;height:14px;line-height:14px;font-size:10px;letter-spacing:-0.25px;color:#1b1b1b;font-weight:normal;white-space:nowrap;"><u>G</u>ive access to</div>
<svg style="position:absolute;left:181px;top:506.49999999999994px" width="8" height="11" viewBox="0 0 8 11"><path d="M1.5 0.8L6.5 5.5 1.5 10.2" stroke="#606060" stroke-width="1" fill="none"/></svg>
<svg style="position:absolute;left:8px;top:522.5px" width="14" height="14" viewBox="0 0 14 14"><circle cx="7" cy="7" r="6" fill="#5a5a5a"/><path d="M1.2 8A6 6 0 0 0 12.8 8z" fill="#b8b8b8"/><circle cx="7" cy="7" r="1.5" fill="#9a9a9a"/><path d="M3 4.5l2 1.5M11 4.5l-2 1.5" stroke="#3a3a3a" stroke-width="1"/></svg>
<div style="position:absolute;left:28.1px;top:522.5px;height:14px;line-height:14px;font-size:10px;letter-spacing:-0.25px;color:#1b1b1b;font-weight:normal;white-space:nowrap;">TeraCopy...</div>
<div style="position:absolute;left:28.1px;top:540.0px;height:14px;line-height:14px;font-size:10px;letter-spacing:-0.25px;color:#1b1b1b;font-weight:normal;white-space:nowrap;">New folder with selection</div>
<div style="position:absolute;left:8.5px;top:559px;width:180px;height:1px;background:#c2c2c2"></div>
<svg style="position:absolute;left:8px;top:563.2px" width="14" height="14" viewBox="0 0 14 14"><path d="M1 8.5C1 5 3.5 3 6 3.5 8 4 8.5 6 8 8L6.5 11H2z" fill="#a8b4cc"/><path d="M2.5 7.5h4" stroke="#7888a8" stroke-width="1"/><rect x="8" y="6" width="5.5" height="7" fill="#2a2a2a"/><rect x="9.3" y="7.5" width="3" height="4" fill="#e8e8e8"/><circle cx="12" cy="2.5" r="1.1" fill="#2a2a2a"/></svg>
<div style="position:absolute;left:28.1px;top:563.2px;height:14px;line-height:14px;font-size:10px;letter-spacing:-0.25px;color:#1b1b1b;font-weight:normal;white-space:nowrap;"><u>T</u>ortoiseGit</div>
<svg style="position:absolute;left:181px;top:564.7px" width="8" height="11" viewBox="0 0 8 11"><path d="M1.5 0.8L6.5 5.5 1.5 10.2" stroke="#606060" stroke-width="1" fill="none"/></svg>
<div style="position:absolute;left:8.5px;top:582px;width:180px;height:1px;background:#c2c2c2"></div>
<svg style="position:absolute;left:8px;top:586.4000000000001px" width="14" height="14" viewBox="0 0 14 14"><rect x="1" y="4" width="12" height="6.5" rx="1" fill="#1a78c0"/><rect x="5" y="2" width="4" height="2" fill="#8ac8f0"/><rect x="5" y="10.5" width="4" height="2" fill="#8ac8f0"/><rect x="2" y="5.5" width="5" height="3" fill="#2a90d8"/></svg>
<div style="position:absolute;left:28.1px;top:586.4000000000001px;height:14px;line-height:14px;font-size:10px;letter-spacing:-0.25px;color:#1b1b1b;font-weight:normal;white-space:nowrap;">Po<u>w</u>erRename</div>
<div style="position:absolute;left:28.1px;top:603.9000000000001px;height:14px;line-height:14px;font-size:10px;letter-spacing:-0.25px;color:#1b1b1b;font-weight:normal;white-space:nowrap;">Restore previous <u>v</u>ersions</div>
<div style="position:absolute;left:8.5px;top:623px;width:180px;height:1px;background:#c2c2c2"></div>
<div style="position:absolute;left:28.1px;top:627.1000000000001px;height:14px;line-height:14px;font-size:10px;letter-spacing:-0.25px;color:#1b1b1b;font-weight:normal;white-space:nowrap;">Se<u>n</u>d to</div>
<svg style="position:absolute;left:181px;top:628.6000000000001px" width="8" height="11" viewBox="0 0 8 11"><path d="M1.5 0.8L6.5 5.5 1.5 10.2" stroke="#606060" stroke-width="1" fill="none"/></svg>
<div style="position:absolute;left:8.5px;top:646px;width:180px;height:1px;background:#c2c2c2"></div>
<div style="position:absolute;left:192px;top:460px;width:201px;height:189px;background:#eeeeee;border:1px solid #a0a0a0;box-sizing:border-box"></div>
<div style="position:absolute;left:193px;top:499.5px;width:199px;height:17px;background:#ffffff"></div>
<div style="position:absolute;left:393px;top:464px;width:2px;height:185px;background:linear-gradient(90deg,rgba(0,0,0,0.32),rgba(0,0,0,0.08))"></div>
<svg style="position:absolute;left:200.5px;top:466.0px" width="14" height="14" viewBox="0 0 14 14"></svg>
<svg style="position:absolute;left:200.5px;top:466.0px" width="14" height="14" viewBox="0 0 14 14"><rect x="0" y="0" width="13" height="13" fill="#0b68c0"/><rect x="0" y="0" width="13" height="5" fill="#1a80d8"/><path d="M5 4.5L9.5 7.5 5 10.5z" fill="#fff"/></svg>
<div style="position:absolute;left:220.4px;top:465.5px;height:14px;line-height:14px;font-size:10px;letter-spacing:-0.25px;color:#1b1b1b;font-weight:normal;white-space:nowrap;">Movies &amp; TV</div>
<svg style="position:absolute;left:200.5px;top:483.5px" width="14" height="14" viewBox="0 0 14 14"></svg>
<svg style="position:absolute;left:200.5px;top:483.5px" width="14" height="14" viewBox="0 0 14 14"><rect x="1" y="5" width="12" height="8" fill="#f4f4f4" stroke="#333" stroke-width="1"/><path d="M1 4.5L1.8 1.2 12.5 2.6 12.8 4.5z" fill="#f4f4f4" stroke="#333" stroke-width="0.9"/><path d="M4 1.6l-1 3M7 2l-1 2.8M10 2.4l-1 2.4" stroke="#333" stroke-width="1"/><path d="M2.5 7h2.5v4.5H2.5zM8 7h3.5v4.5H8z" fill="#555"/><path d="M5.8 7h1.5v4.5H5.8z" fill="#bbb"/></svg>
<div style="position:absolute;left:220.4px;top:483.0px;height:14px;line-height:14px;font-size:10px;letter-spacing:-0.25px;color:#1b1b1b;font-weight:normal;white-space:nowrap;">MPC-HC (x64)</div>
<svg style="position:absolute;left:200.5px;top:501.0px" width="14" height="14" viewBox="0 0 14 14"></svg>
<svg style="position:absolute;left:200.5px;top:501.0px" width="14" height="14" viewBox="0 0 14 14"><circle cx="6.5" cy="6.5" r="5.6" fill="none" stroke="#5b1e5e" stroke-width="1.8"/><path d="M5 3.8L9.2 6.5 5 9.2z" fill="#7b3a80"/></svg>
<div style="position:absolute;left:220.4px;top:500.5px;height:14px;line-height:14px;font-size:10px;letter-spacing:-0.25px;color:#1b1b1b;font-weight:normal;white-space:nowrap;">mpv</div>
<svg style="position:absolute;left:200.5px;top:518.5px" width="14" height="14" viewBox="0 0 14 14"></svg>
<svg style="position:absolute;left:200.5px;top:518.5px" width="14" height="14" viewBox="0 0 14 14"><rect x="0" y="0" width="13" height="13" fill="#1060c0"/><path d="M0 13V8L4 4.5 8 8.5 10 7 13 10V13z" fill="#0a3a88"/><circle cx="10" cy="3.5" r="1.3" fill="#8ac0f0"/></svg>
<div style="position:absolute;left:220.4px;top:518.0px;height:14px;line-height:14px;font-size:10px;letter-spacing:-0.25px;color:#1b1b1b;font-weight:normal;white-space:nowrap;">Photos</div>
<svg style="position:absolute;left:200.5px;top:536.0px" width="14" height="14" viewBox="0 0 14 14"></svg>
<svg style="position:absolute;left:200.5px;top:536.0px" width="14" height="14" viewBox="0 0 14 14"><rect x="0" y="0" width="13" height="13" rx="1.5" fill="#f3da58"/><circle cx="6.5" cy="6.5" r="4.3" fill="#fbf0b0" stroke="#e8c830"/><path d="M5.2 4.5L8.8 6.5 5.2 8.5z" fill="#e8c030"/></svg>
<div style="position:absolute;left:220.4px;top:535.5px;height:14px;line-height:14px;font-size:10px;letter-spacing:-0.25px;color:#1b1b1b;font-weight:normal;white-space:nowrap;">PotPlayer (64-Bit)</div>
<svg style="position:absolute;left:200.5px;top:553.5px" width="14" height="14" viewBox="0 0 14 14"></svg>
<svg style="position:absolute;left:200.5px;top:553.5px" width="14" height="14" viewBox="0 0 14 14"><path d="M5 1h3l3.5 10h-10z" fill="#f08a1a"/><path d="M4 5h5l0.7 2h-6.4z" fill="#fff"/><rect x="0.5" y="11" width="12" height="2" fill="#e07010"/></svg>
<div style="position:absolute;left:220.4px;top:553.0px;height:14px;line-height:14px;font-size:10px;letter-spacing:-0.25px;color:#1b1b1b;font-weight:normal;white-space:nowrap;">VLC media player</div>
<svg style="position:absolute;left:200.5px;top:571.0px" width="14" height="14" viewBox="0 0 14 14"></svg>
<svg style="position:absolute;left:200.5px;top:571.0px" width="14" height="14" viewBox="0 0 14 14"><path d="M1.5 9.5L7 1.5 12 4.5 6.5 12.5z" fill="#d8b060" stroke="#5a4020" stroke-width="1"/><path d="M3.5 8.5L8 3M5.5 10.5L10 5" stroke="#6a4a20" stroke-width="1"/></svg>
<div style="position:absolute;left:220.4px;top:570.5px;height:14px;line-height:14px;font-size:10px;letter-spacing:-0.25px;color:#1b1b1b;font-weight:normal;white-space:nowrap;">Winamp</div>
<svg style="position:absolute;left:200.5px;top:588.5px" width="14" height="14" viewBox="0 0 14 14"></svg>
<svg style="position:absolute;left:200.5px;top:588.5px" width="14" height="14" viewBox="0 0 14 14"><rect x="0.5" y="0.5" width="12" height="12" fill="#8a9ab0" stroke="#6a7a90"/><rect x="2" y="2" width="9" height="9" fill="#f0a020"/><path d="M5 3.8L9.2 6.5 5 9.2z" fill="#fff8e0"/></svg>
<div style="position:absolute;left:220.4px;top:588.0px;height:14px;line-height:14px;font-size:10px;letter-spacing:-0.25px;color:#1b1b1b;font-weight:normal;white-space:nowrap;">Windows Media Player</div>
<div style="position:absolute;left:201px;top:606px;width:184px;height:1px;background:#c2c2c2"></div>
<svg style="position:absolute;left:200.5px;top:612.2px" width="14" height="14" viewBox="0 0 14 14"><rect x="0.5" y="0.5" width="12" height="12" fill="#2a2a2a"/><rect x="2" y="3.5" width="9" height="7.5" fill="#e8e8e0"/><path d="M4.5 3.5V2h4v1.5" stroke="#e8e8e0" fill="none"/><rect x="5.5" y="6" width="2" height="2" fill="#999"/></svg>
<div style="position:absolute;left:220.4px;top:611.7px;height:14px;line-height:14px;font-size:10px;letter-spacing:-0.25px;color:#1b1b1b;font-weight:normal;white-space:nowrap;"><u>S</u>earch the Microsoft Store</div>
<div style="position:absolute;left:220.4px;top:629.6px;height:14px;line-height:14px;font-size:10px;letter-spacing:-0.25px;color:#1b1b1b;font-weight:normal;white-space:nowrap;"><u>C</u>hoose another app</div>
<svg style="position:absolute;left:313px;top:504.5px" width="12" height="19" viewBox="0 0 12 19"><path d="M1.5 1.5V14L4.5 11.2 6.8 16.5 8.6 15.7 6.5 10.7H10.5z" fill="#fff" stroke="#111" stroke-width="1" stroke-linejoin="round"/></svg>
</body></html>
